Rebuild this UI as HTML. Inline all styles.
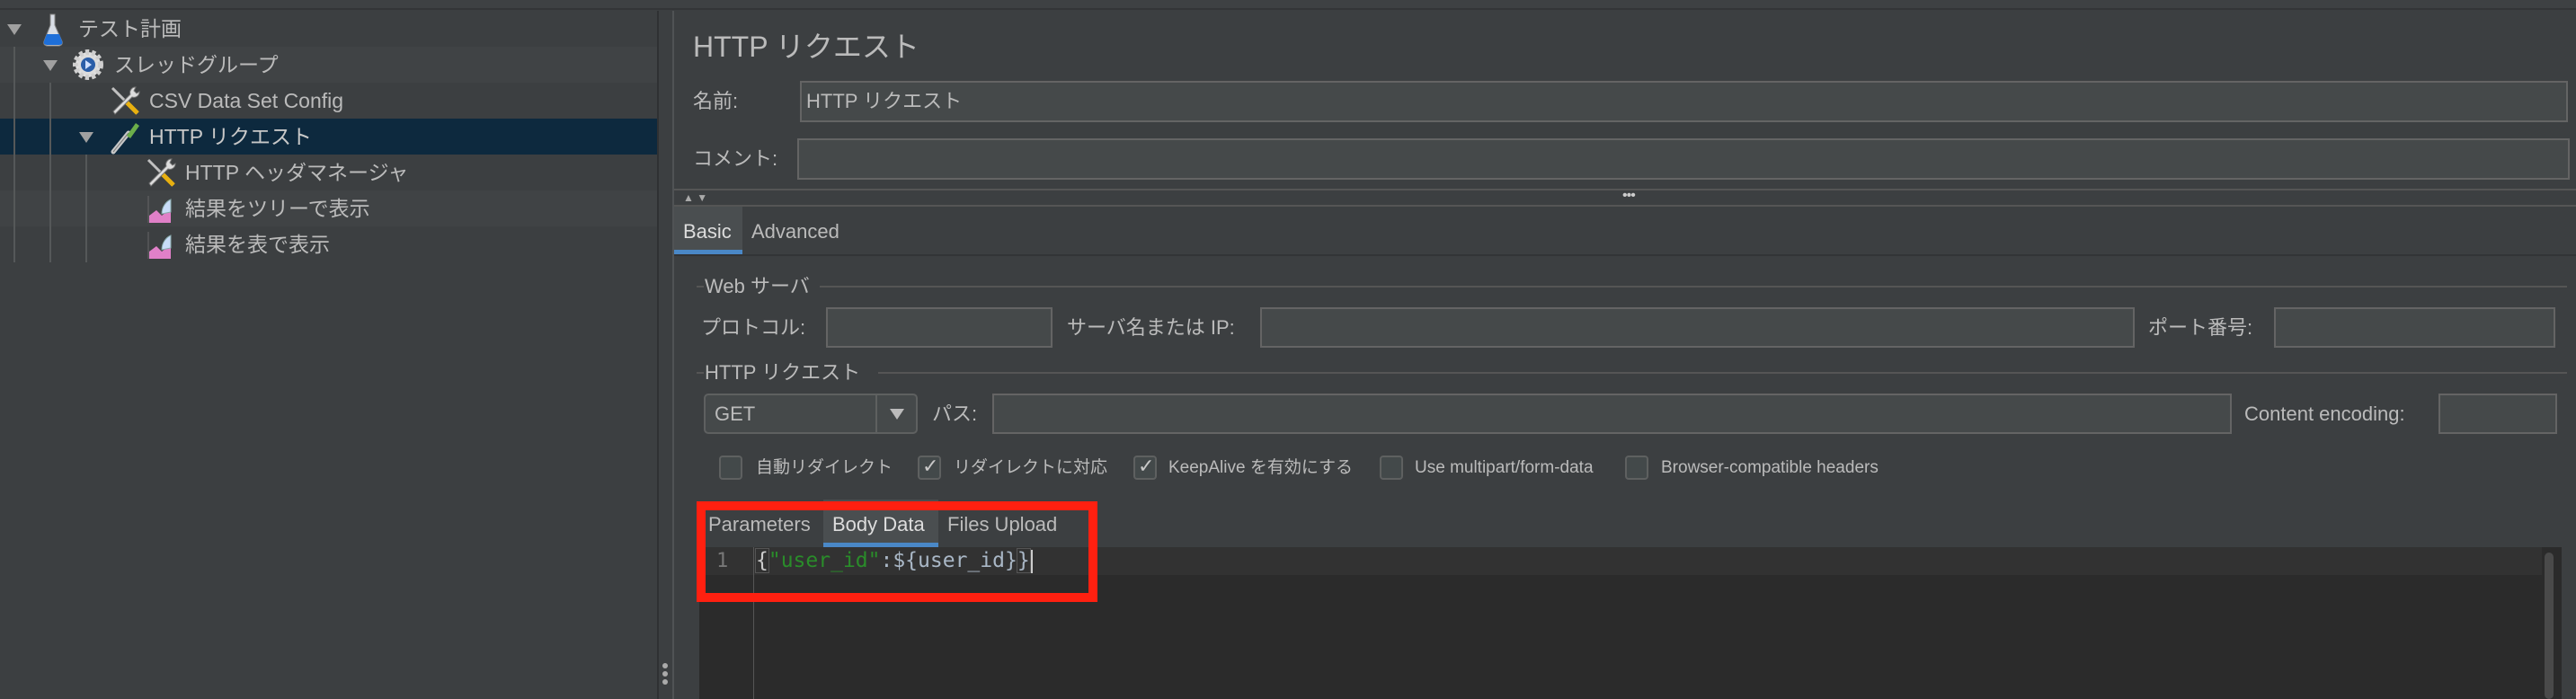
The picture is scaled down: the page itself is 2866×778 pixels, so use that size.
<!DOCTYPE html>
<html><head><meta charset="utf-8"><style>
*{margin:0;padding:0;box-sizing:border-box}
body{width:2866px;height:778px;background:#3c3f41;position:relative;overflow:hidden;font-family:"Liberation Sans","Noto Sans CJK JP",sans-serif;color:#bbbbbb}
.a{position:absolute;white-space:nowrap}
.row{position:absolute;left:0;width:731px;height:40px}
.t{position:absolute;font-size:23px;line-height:40px;top:0}
.tri{position:absolute;width:0;height:0;border-left:8px solid transparent;border-right:8px solid transparent;border-top:12px solid #a0a0a0;top:15px}
.vl{position:absolute;width:2px;background:#555859}
.inp{position:absolute;background:#45494a;border:2px solid #646464}
.lbl{position:absolute;font-size:22px;white-space:nowrap;line-height:30px}
.cb{position:absolute;width:26px;height:27px;border:2px solid #5e6060;border-radius:4px;background:#43494a;top:507px}
.cb.on::after{content:"✓";position:absolute;left:3px;top:-2px;font-size:22px;color:#c8c8c8;font-family:"DejaVu Sans",sans-serif}
.cl{position:absolute;font-size:19px;top:507px;line-height:27px}
</style></head><body>
<div class="a" style="left:0;top:0;width:2866px;height:11px;background:#3e4143;border-bottom:2px solid #333537"></div>
<div class="row" style="top:12px;background:#3c3f41"></div>
<div class="row" style="top:52px;background:#404345"></div>
<div class="row" style="top:92px;background:#3c3f41"></div>
<div class="row" style="top:132px;background:#0d293e"></div>
<div class="row" style="top:172px;background:#3c3f41"></div>
<div class="row" style="top:212px;background:#404345"></div>
<div class="row" style="top:252px;background:#3c3f41"></div>
<div class="vl" style="left:15px;top:52px;height:240px"></div>
<div class="vl" style="left:55px;top:92px;height:200px"></div>
<div class="vl" style="left:95px;top:172px;height:120px"></div>
<div class="a" style="left:731px;top:12px;width:2px;height:766px;background:#2f3133"></div>
<div class="a" style="left:748px;top:12px;width:2px;height:766px;background:#505355"></div>
<div class="tri" style="left:8px;top:27px"></div>
<svg class="a" style="left:46px;top:14px" width="26" height="38" viewBox="0 0 26 38"><path d="M10 2h5v12l8 18c1 3-1 5-4 5H7c-3 0-5-2-4-5l7-18z" fill="#d8dde5" stroke="#888" stroke-width="1"/><path d="M6 24h14l3 8c1 3-1 4-4 4H7c-3 0-5-1-4-4z" fill="#1e6fd9"/></svg>
<div class="t" style="left:87px;top:12px">テスト計画</div>
<div class="tri" style="left:48px;top:67px"></div>
<svg class="a" style="left:80px;top:54px" width="36" height="36" viewBox="0 0 36 36"><circle cx="18" cy="18" r="14" fill="#e0e0e0" stroke="#cfcfcf" stroke-width="6" stroke-dasharray="4 3"/><circle cx="18" cy="18" r="11" fill="#dcdcdc"/><circle cx="18" cy="18" r="8" fill="#2a5ea8"/><path d="M15 13l7 5-7 5z" fill="#cfe0ff"/></svg>
<div class="t" style="left:127px;top:52px">スレッドグループ</div>
<svg class="a" style="left:121px;top:94px" width="36" height="36" viewBox="0 0 36 36"><path d="M4 4l28 28" stroke="#c0c0c0" stroke-width="3"/><path d="M18 18l14 14" stroke="#e8b010" stroke-width="5"/><path d="M30 3a6 6 0 0 0-6 8L5 30l2 3 19-19a6 6 0 0 0 8-6l-3 2-3-3z" fill="#ddd" stroke="#777"/></svg>
<div class="t" style="left:166px;top:92px">CSV Data Set Config</div>
<div class="tri" style="left:88px;top:147px"></div>
<svg class="a" style="left:121px;top:134px" width="36" height="38" viewBox="0 0 36 38"><path d="M5 35L22 14" stroke="#c8c8c8" stroke-width="5" stroke-linecap="round"/><path d="M5 35L22 14" stroke="#777" stroke-width="1"/><path d="M20 17l10-14 4 3-10 14z" fill="#6cae4a"/></svg>
<div class="t" style="left:166px;top:132px;color:#c8c8c8">HTTP リクエスト</div>
<svg class="a" style="left:161px;top:174px" width="36" height="36" viewBox="0 0 36 36"><path d="M4 4l28 28" stroke="#c0c0c0" stroke-width="3"/><path d="M18 18l14 14" stroke="#e8b010" stroke-width="5"/><path d="M30 3a6 6 0 0 0-6 8L5 30l2 3 19-19a6 6 0 0 0 8-6l-3 2-3-3z" fill="#ddd" stroke="#777"/></svg>
<div class="t" style="left:206px;top:172px">HTTP ヘッダマネージャ</div>
<svg class="a" style="left:163px;top:216px" width="32" height="34" viewBox="0 0 32 34"><path d="M2 32V2" stroke="#666" stroke-width="1"/><path d="M3 32V24l8-6 6 6 10-8v16z" fill="#e080c8"/><path d="M17 22c0-8 5-14 10-16v14z" fill="#c8dcf8" stroke="#8aa" stroke-width="1"/></svg>
<div class="t" style="left:206px;top:212px">結果をツリーで表示</div>
<svg class="a" style="left:163px;top:256px" width="32" height="34" viewBox="0 0 32 34"><path d="M2 32V2" stroke="#666" stroke-width="1"/><path d="M3 32V24l8-6 6 6 10-8v16z" fill="#e080c8"/><path d="M17 22c0-8 5-14 10-16v14z" fill="#c8dcf8" stroke="#8aa" stroke-width="1"/></svg>
<div class="t" style="left:206px;top:252px">結果を表で表示</div>
<div class="a" style="left:737px;top:738px;width:6px;height:6px;border-radius:3px;background:#aaa"></div>
<div class="a" style="left:737px;top:747px;width:6px;height:6px;border-radius:3px;background:#aaa"></div>
<div class="a" style="left:737px;top:756px;width:6px;height:6px;border-radius:3px;background:#aaa"></div>

<div class="a" style="left:771px;top:32px;font-size:32px;line-height:40px">HTTP リクエスト</div>
<div class="lbl" style="left:771px;top:98px">名前:</div>
<div class="inp" style="left:890px;top:90px;width:1967px;height:46px"></div>
<div class="lbl" style="left:897px;top:98px">HTTP リクエスト</div>
<div class="lbl" style="left:771px;top:162px">コメント:</div>
<div class="inp" style="left:887px;top:154px;width:1972px;height:46px"></div>
<div class="a" style="left:750px;top:210px;width:2116px;height:2px;background:#555"></div>
<div class="a" style="left:760px;top:212px;font-size:12px;color:#aaa;line-height:16px">▲ ▼</div>
<div class="a" style="left:1805px;top:208px;font-size:16px;color:#ccc;line-height:20px;letter-spacing:-1px">•••</div>
<div class="a" style="left:750px;top:228px;width:2116px;height:2px;background:#555"></div>
<div class="a" style="left:750px;top:230px;width:76px;height:53px;background:#4a4e50"></div>
<div class="a" style="left:750px;top:278px;width:76px;height:5px;background:#4a88c7"></div>
<div class="lbl" style="left:760px;top:243px;color:#ddd">Basic</div>
<div class="lbl" style="left:836px;top:243px">Advanced</div>
<div class="a" style="left:750px;top:283px;width:2116px;height:2px;background:#323436"></div>

<div class="a" style="left:775px;top:318px;width:8px;height:2px;background:#555"></div>
<div class="lbl" style="left:784px;top:304px">Web サーバ</div>
<div class="a" style="left:912px;top:318px;width:1944px;height:2px;background:#555"></div>
<div class="lbl" style="left:780px;top:350px">プロトコル:</div>
<div class="inp" style="left:919px;top:342px;width:252px;height:45px"></div>
<div class="lbl" style="left:1187px;top:350px">サーバ名または IP:</div>
<div class="inp" style="left:1402px;top:342px;width:973px;height:45px"></div>
<div class="lbl" style="left:2390px;top:350px">ポート番号:</div>
<div class="inp" style="left:2530px;top:342px;width:313px;height:45px"></div>

<div class="a" style="left:775px;top:414px;width:8px;height:2px;background:#555"></div>
<div class="lbl" style="left:784px;top:400px">HTTP リクエスト</div>
<div class="a" style="left:977px;top:414px;width:1879px;height:2px;background:#555"></div>
<div class="a" style="left:783px;top:438px;width:238px;height:45px;background:#45494a;border:2px solid #5e6060;border-radius:5px"></div>
<div class="a" style="left:974px;top:440px;width:2px;height:41px;background:#5e6060"></div>
<div class="a" style="left:990px;top:455px;width:0;height:0;border-left:8px solid transparent;border-right:8px solid transparent;border-top:12px solid #bbb"></div>
<div class="lbl" style="left:795px;top:446px">GET</div>
<div class="lbl" style="left:1037px;top:446px">パス:</div>
<div class="inp" style="left:1104px;top:438px;width:1379px;height:45px"></div>
<div class="lbl" style="left:2497px;top:446px">Content encoding:</div>
<div class="inp" style="left:2713px;top:438px;width:132px;height:45px"></div>

<div class="cb" style="left:800px"></div><div class="cl" style="left:841px">自動リダイレクト</div>
<div class="cb on" style="left:1021px"></div><div class="cl" style="left:1061px">リダイレクトに対応</div>
<div class="cb on" style="left:1261px"></div><div class="cl" style="left:1300px">KeepAlive を有効にする</div>
<div class="cb" style="left:1535px"></div><div class="cl" style="left:1574px">Use multipart/form-data</div>
<div class="cb" style="left:1808px"></div><div class="cl" style="left:1848px">Browser-compatible headers</div>

<div class="a" style="left:916px;top:556px;width:128px;height:53px;background:#4a4e50"></div>
<div class="a" style="left:916px;top:604px;width:128px;height:5px;background:#4a88c7"></div>
<div class="lbl" style="left:788px;top:569px">Parameters</div>
<div class="lbl" style="left:926px;top:569px;color:#ddd">Body Data</div>
<div class="lbl" style="left:1054px;top:569px">Files Upload</div>

<div class="a" style="left:778px;top:609px;width:2072px;height:169px;background:#2b2b2b"></div>
<div class="a" style="left:778px;top:609px;width:2050px;height:31px;background:#323232"></div>
<div class="a" style="left:838px;top:609px;width:1px;height:169px;background:#555"></div>
<div class="a" style="left:2831px;top:615px;width:10px;height:163px;border-radius:5px;background:#4a4a4a"></div>
<div class="a" style="left:797px;top:609px;font-family:'DejaVu Sans Mono',monospace;font-size:22px;line-height:31px;color:#777">1</div>
<div class="a" style="left:841px;top:609px;font-family:'DejaVu Sans Mono',monospace;font-size:23px;line-height:31px;color:#a9b7c6"><span style="color:#ccc;outline:1px solid #555">{</span><span style="color:#2a8c2a">"user_id"</span>:${user_id}<span style="outline:1px solid #555">}</span><span style="display:inline-block;width:3px;height:26px;background:#ccc;vertical-align:middle"></span></div>

<div class="a" style="left:775px;top:558px;width:446px;height:112px;border:10px solid #ff2010"></div>
</body></html>
